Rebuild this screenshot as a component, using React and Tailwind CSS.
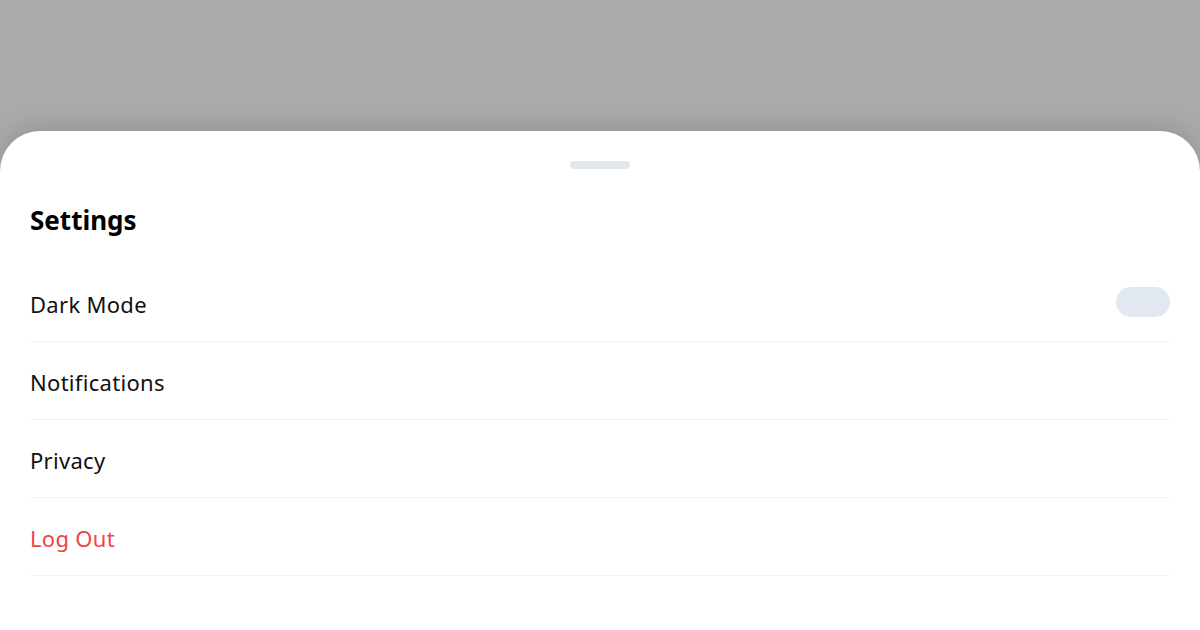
export default function App() {
  const rows = [
    { label: "Dark Mode", toggle: true },
    { label: "Notifications" },
    { label: "Privacy" },
    { label: "Log Out", danger: true },
  ];
  return (
    <div
      className="h-[630px] w-[1200px] bg-[#a9aaac] flex flex-col justify-end overflow-hidden"
      style={{ fontFamily: '"Noto Sans", "Open Sans", sans-serif' }}
    >
      <div className="bg-white rounded-t-[40px] shadow-[0_-6px_24px_rgba(0,0,0,0.12)] px-[30px] pt-[30px] pb-[54px]">
        <div className="flex justify-center">
          <div className="w-[60px] h-[8px] rounded-full bg-[#e2e8f0]" />
        </div>
        <h2 className="mt-[35px] mb-[28px] text-[26px] leading-[32px] font-bold text-black">Settings</h2>
        <div>
          {rows.map((r) => (
            <div
              key={r.label}
              className="h-[78px] pt-[3px] flex items-center justify-between border-b border-[#f1f2f4]"
            >
              <span className={`text-[22px] leading-[30px] tracking-[0.3px] ${r.danger ? "text-[#ef4444]" : "text-[#111]"}`}>
                {r.label}
              </span>
              {r.toggle && <div className="w-[54px] h-[30px] -mt-[4px] rounded-full bg-[#e2e8f0]" />}
            </div>
          ))}
        </div>
      </div>
    </div>
  );
}
